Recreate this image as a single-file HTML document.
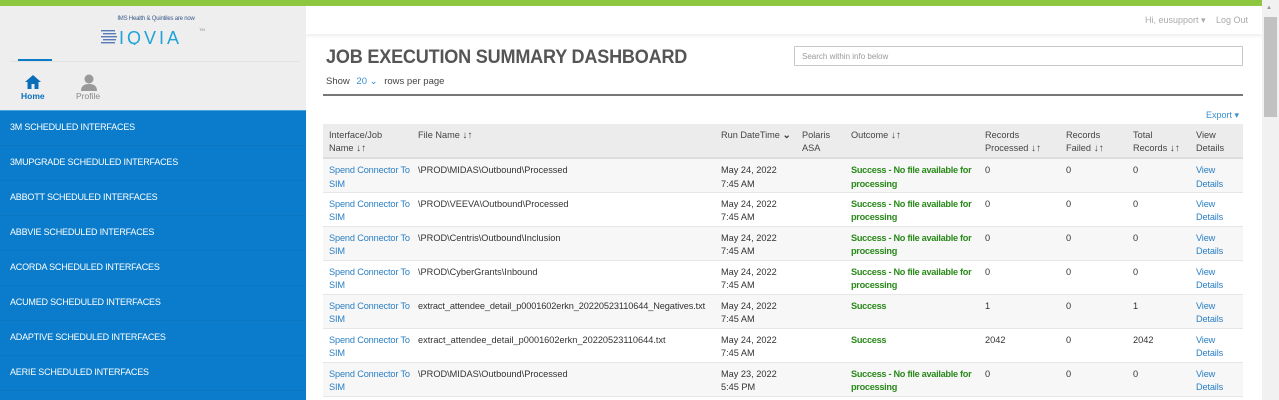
<!DOCTYPE html>
<html><head><meta charset="utf-8"><style>
*{box-sizing:border-box;margin:0;padding:0}
body{width:1279px;height:400px;overflow:hidden;font-family:"Liberation Sans",sans-serif;background:#fff;position:relative}
.green{position:absolute;left:0;top:0;width:1262px;height:6px;background:#8dc63f}
.side{position:absolute;left:0;top:6px;width:306px;height:394px;background:#eeeeee}
.logo-t{position:absolute;left:104px;top:10px;font-size:6px;color:#3a5a8a;width:104px;text-align:center;letter-spacing:-.2px}
.logo{position:absolute;left:101px;top:19px}
.tabline{position:absolute;left:18px;top:53px;width:34px;height:2px;background:#0a7cc8}
.tabsep{position:absolute;left:10px;top:55px;width:290px;height:1px;background:#e2e2e2}
.nav{position:absolute;top:85px;font-size:8.5px}
.blue{position:absolute;left:0;top:110px;width:306px;height:290px;background:#0a7ccb;border-top:1px solid #4aa3e0}
.blue div{height:35px;line-height:32px;padding-left:10px;color:#fff;font-size:9px;border-bottom:1px solid #0b77c2;letter-spacing:-.2px}
.top{position:absolute;left:306px;top:6px;width:956px;height:28px;background:#fff;box-shadow:0 2px 3px #eee}
.user{position:absolute;top:15px;font-size:9px;color:#aaa}
h1{position:absolute;left:326px;top:47px;font-size:19px;color:#555;letter-spacing:-.2px;font-weight:bold;transform:scaleX(.95);transform-origin:left}
.show{position:absolute;left:326px;top:76px;font-size:9.5px;color:#444}
.show b{color:#3a8fd0;font-weight:normal;margin:0 4px}
.search{position:absolute;left:794px;top:46px;width:449px;height:20px;border:1px solid #c8c8c8;font-size:8px;color:#999;padding:5px 7px;border-radius:1px}
.hr{position:absolute;left:323px;top:94px;width:920px;height:2px;background:#777}
.export{position:absolute;left:1206px;top:110px;font-size:9px;color:#3a8fd0}
table{position:absolute;left:323px;top:124px;width:920px;border-collapse:collapse;font-size:9.2px;color:#333;table-layout:fixed}
th{background:#ececec;font-weight:normal;text-align:left;vertical-align:top;padding:5px 0 0 6px;height:34px;line-height:13px;color:#444;border-bottom:2px solid #ddd}
td{vertical-align:top;padding:5px 0 0 6px;height:34px;line-height:13.5px;border-bottom:1px solid #e6e6e6}
tr:nth-child(even) td{background:#f7f7f7}
.l{color:#2a7fc4;letter-spacing:-.15px}
.g{color:#2a8a1a;font-weight:bold;letter-spacing:-.3px}
.s{font-weight:bold;font-size:10px}
.scr{position:absolute;left:1262px;top:0;width:17px;height:400px;background:#f1f1f1}
.thumb{position:absolute;left:1264px;top:17px;width:13px;height:100px;background:#c1c1c1}
</style></head><body>
<div class="green"></div>
<div class="side">
<div class="logo-t">IMS Health &amp; Quintiles are now</div>
<svg class="logo" width="105" height="20" viewBox="0 0 105 20">
<g fill="#5a7bb5"><rect x="0" y="5" width="14" height="1.4"/><rect x="2" y="8" width="13" height="1.4"/><rect x="0" y="11" width="16" height="1.4"/><rect x="2" y="14" width="13" height="1.4"/><rect x="0" y="17" width="14" height="1.4"/></g>
<text x="18" y="19" font-family="Liberation Sans" font-size="18" fill="#1fa3d9" letter-spacing="3">IQVIA</text>
<text x="98" y="6" font-size="4" fill="#888">TM</text></svg>
<div class="tabline"></div><div class="tabsep"></div>
<svg style="position:absolute;left:24px;top:68px" width="18" height="16" viewBox="0 0 18 16"><path d="M9 1L1 8h2.5v7h4v-5h3v5h4V8H17z" fill="#0a6fb8"/></svg>
<div class="nav" style="left:21px;color:#0a6fb8;font-weight:bold">Home</div>
<svg style="position:absolute;left:80px;top:68px" width="18" height="17" viewBox="0 0 18 17"><circle cx="9" cy="5" r="4.5" fill="#999"/><path d="M1 17c0-5 3-7 8-7s8 2 8 7z" fill="#999"/></svg>
<div class="nav" style="left:76px;color:#888">Profile</div>
</div>
<div class="blue">
<div>3M SCHEDULED INTERFACES</div><div>3MUPGRADE SCHEDULED INTERFACES</div><div>ABBOTT SCHEDULED INTERFACES</div><div>ABBVIE SCHEDULED INTERFACES</div><div>ACORDA SCHEDULED INTERFACES</div><div>ACUMED SCHEDULED INTERFACES</div><div>ADAPTIVE SCHEDULED INTERFACES</div><div>AERIE SCHEDULED INTERFACES</div>
</div>
<div class="top"></div>
<div class="user" style="left:1145px">Hi, eusupport ▾</div>
<div class="user" style="left:1216px">Log Out</div>
<h1>JOB EXECUTION SUMMARY DASHBOARD</h1>
<div class="show">Show <b>20 ⌄</b> rows per page</div>
<div class="search">Search within info below</div>
<div class="hr"></div>
<div class="export">Export ▾</div>
<table>
<colgroup><col style="width:89px"><col style="width:303px"><col style="width:81px"><col style="width:49px"><col style="width:134px"><col style="width:81px"><col style="width:67px"><col style="width:63px"><col style="width:53px"></colgroup>
<tr><th>Interface/Job<br>Name <span class="s">↓↑</span></th><th>File Name <span class="s">↓↑</span></th><th>Run DateTime <span class="s">⌄</span></th><th>Polaris<br>ASA</th><th>Outcome <span class="s">↓↑</span></th><th>Records<br>Processed <span class="s">↓↑</span></th><th>Records<br>Failed <span class="s">↓↑</span></th><th>Total<br>Records <span class="s">↓↑</span></th><th>View<br>Details</th></tr>
<tr><td class="l">Spend Connector To<br>SIM</td><td>\PROD\MIDAS\Outbound\Processed</td><td>May 24, 2022<br>7:45 AM</td><td></td><td class="g">Success - No file available for<br>processing</td><td>0</td><td>0</td><td>0</td><td class="l">View<br>Details</td></tr>
<tr><td class="l">Spend Connector To<br>SIM</td><td>\PROD\VEEVA\Outbound\Processed</td><td>May 24, 2022<br>7:45 AM</td><td></td><td class="g">Success - No file available for<br>processing</td><td>0</td><td>0</td><td>0</td><td class="l">View<br>Details</td></tr>
<tr><td class="l">Spend Connector To<br>SIM</td><td>\PROD\Centris\Outbound\Inclusion</td><td>May 24, 2022<br>7:45 AM</td><td></td><td class="g">Success - No file available for<br>processing</td><td>0</td><td>0</td><td>0</td><td class="l">View<br>Details</td></tr>
<tr><td class="l">Spend Connector To<br>SIM</td><td>\PROD\CyberGrants\Inbound</td><td>May 24, 2022<br>7:45 AM</td><td></td><td class="g">Success - No file available for<br>processing</td><td>0</td><td>0</td><td>0</td><td class="l">View<br>Details</td></tr>
<tr><td class="l">Spend Connector To<br>SIM</td><td style="letter-spacing:-.1px">extract_attendee_detail_p0001602erkn_20220523110644_Negatives.txt</td><td>May 24, 2022<br>7:45 AM</td><td></td><td class="g">Success</td><td>1</td><td>0</td><td>1</td><td class="l">View<br>Details</td></tr>
<tr><td class="l">Spend Connector To<br>SIM</td><td>extract_attendee_detail_p0001602erkn_20220523110644.txt</td><td>May 24, 2022<br>7:45 AM</td><td></td><td class="g">Success</td><td>2042</td><td>0</td><td>2042</td><td class="l">View<br>Details</td></tr>
<tr><td class="l">Spend Connector To<br>SIM</td><td>\PROD\MIDAS\Outbound\Processed</td><td>May 23, 2022<br>5:45 PM</td><td></td><td class="g">Success - No file available for<br>processing</td><td>0</td><td>0</td><td>0</td><td class="l">View<br>Details</td></tr>
</table>
<div class="scr"></div><div class="thumb"></div>
<div style="position:absolute;left:1266px;top:5px;font-size:6px;color:#999">▲</div>
</body></html>
